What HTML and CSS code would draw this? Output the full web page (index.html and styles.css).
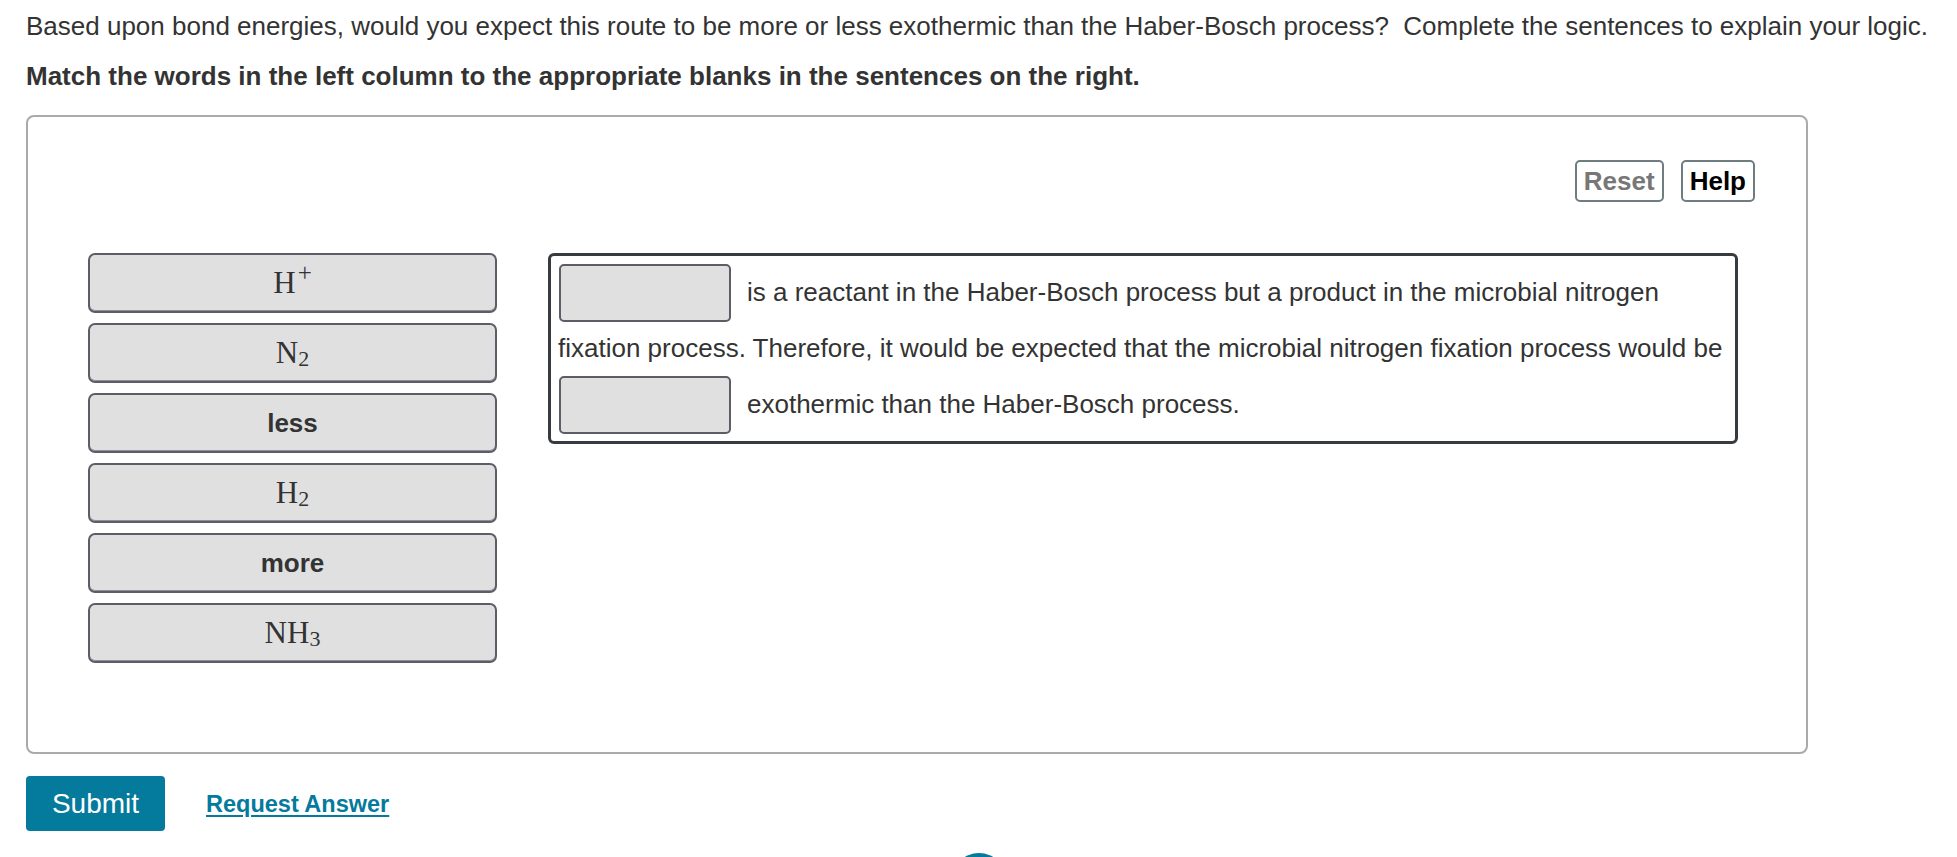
FILE: index.html
```html
<!DOCTYPE html>
<html>
<head>
<meta charset="utf-8">
<title>Matching</title>
<link rel="stylesheet" href="styles.css">
</head>
<body>
<p class="question">Based upon bond energies, would you expect this route to be more or less exothermic than the Haber-Bosch process?&nbsp; Complete the sentences to explain your logic.</p>
<p class="instructions">Match the words in the left column to the appropriate blanks in the sentences on the right.</p>
<div class="panel">
  <div class="toolbar">
    <button class="tool reset">Reset</button>
    <button class="tool help">Help</button>
  </div>
  <div class="workarea">
    <ul class="choices">
      <li class="choice chem">H<span class="sup">+</span></li>
      <li class="choice chem">N<span class="sub">2</span></li>
      <li class="choice word">less</li>
      <li class="choice chem">H<span class="sub">2</span></li>
      <li class="choice word">more</li>
      <li class="choice chem">NH<span class="sub">3</span></li>
    </ul>
    <div class="sentences"><span class="blank"></span>is a reactant in the Haber-Bosch process but a product in the microbial nitrogen<br>fixation process. Therefore, it would be expected that the microbial nitrogen fixation process would be<br><span class="blank"></span>exothermic than the Haber-Bosch process.</div>
  </div>
</div>
<div class="actions">
  <button class="submit">Submit</button>
  <a class="request" href="#">Request Answer</a>
</div>
<div class="fab-strip"><div class="fab"></div></div>
</body>
</html>
```

FILE: styles.css
```css
html {
  overflow: hidden;
}

body {
  margin: 0;
  padding: 11px 26px 0;
  font-family: "Liberation Sans", Arial, Helvetica, sans-serif;
  font-size: 26px;
  line-height: 30px;
  color: #333333;
  background: #ffffff;
}

.question {
  margin: 0 0 20px;
}

.instructions {
  margin: 0 0 24px;
  font-weight: bold;
}

.panel {
  box-sizing: border-box;
  width: 1782px;
  height: 639px;
  border: 2px solid #aaaaaa;
  border-radius: 8px;
  padding: 43px 0 0 60px;
}

.toolbar {
  display: flex;
  justify-content: flex-end;
  gap: 17px;
  padding-right: 51px;
}

.tool {
  box-sizing: border-box;
  height: 42px;
  padding: 0 7px;
  border: 2px solid #6f7c82;
  border-radius: 5px;
  background: #ffffff;
  font-family: "Liberation Sans", Arial, sans-serif;
  font-weight: bold;
  font-size: 26px;
  line-height: 38px;
}

.reset {
  color: #777777;
}

.help {
  color: #000000;
}

.workarea {
  display: flex;
  align-items: flex-start;
  gap: 51px;
  margin-top: 51px;
}

.choices {
  list-style: none;
  margin: 0;
  padding: 0;
  width: 409px;
  display: flex;
  flex-direction: column;
  gap: 10px;
}

.choice {
  box-sizing: border-box;
  height: 60px;
  border: 2px solid #5d5d68;
  border-radius: 7px;
  background: #e0e0e0;
  box-shadow: inset 0 -1px 0 #8e8e99;
  display: flex;
  align-items: center;
  justify-content: center;
  color: #333333;
}

.word {
  font-weight: bold;
  font-size: 26px;
}

.chem {
  font-family: "Liberation Serif", "Times New Roman", serif;
  font-size: 31px;
  line-height: 30px;
}

.sup {
  font-size: 25px;
  position: relative;
  top: -10px;
  margin-left: 2px;
}

.sub {
  font-size: 22px;
  position: relative;
  top: 6px;
}

.sentences {
  box-sizing: border-box;
  width: 1190px;
  height: 191px;
  border: 3px solid #353b3f;
  border-radius: 6px;
  padding: 8px 7px 0;
  line-height: 56px;
  white-space: nowrap;
  color: #333333;
}

.blank {
  display: inline-block;
  box-sizing: border-box;
  width: 172px;
  height: 58px;
  margin: -2px 16px -2px 1px;
  border: 2px solid #5d5d68;
  border-radius: 5px;
  background: #e0e0e0;
  vertical-align: -19px;
}

.actions {
  display: flex;
  align-items: center;
  gap: 41px;
  margin-top: 22px;
}

.submit {
  box-sizing: border-box;
  width: 139px;
  height: 55px;
  border: 0;
  border-radius: 4px;
  background: #047a9c;
  color: #ffffff;
  font-family: "Liberation Sans", Arial, sans-serif;
  font-size: 28px;
}

.request {
  color: #047a9c;
  font-weight: bold;
  font-size: 23.5px;
  text-decoration: underline;
  text-underline-offset: 3px;
}

.fab-strip {
  display: flex;
  justify-content: center;
  height: 5px;
  margin-top: 22px;
  overflow: hidden;
}

.fab {
  flex: none;
  width: 56px;
  height: 56px;
  border-radius: 50%;
  background: #047a9c;
}
```
